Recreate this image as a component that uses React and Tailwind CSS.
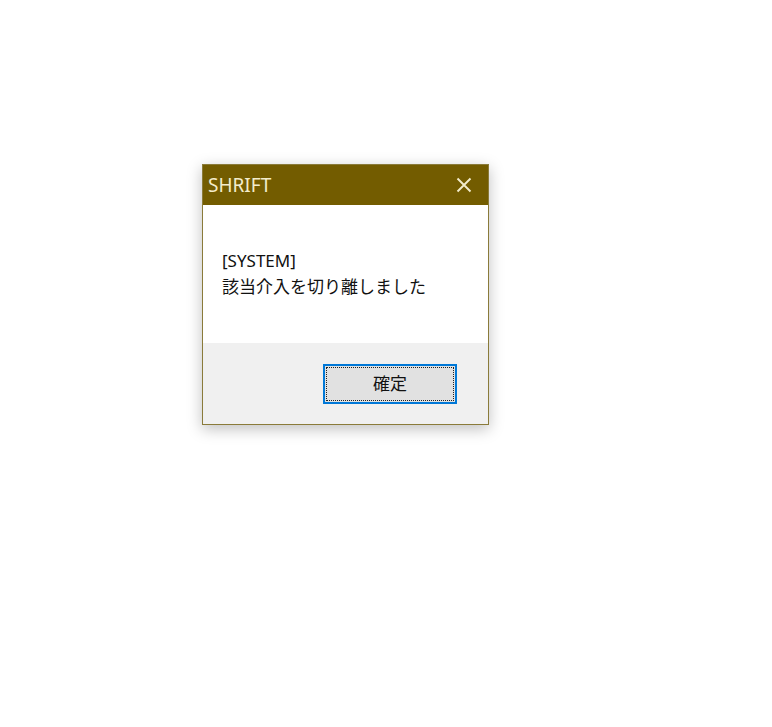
export default function App() {
  return (
    <div className="min-h-screen bg-white pt-[164px] pl-[202px]" style={{ fontFamily: '"Noto Sans", "Noto Sans CJK JP", sans-serif' }}>
      <div className="w-[287px] border border-[#8a7b3a] bg-white shadow-[0_4px_14px_rgba(0,0,0,0.25)]">
        <div className="h-[40px] bg-[#735c00] flex items-center justify-between pl-[5px] pr-[16px]">
          <span className="text-[19px] text-[#f3eccc] leading-none">SHRIFT</span>
          <svg width="16" height="16" viewBox="0 0 16 16" className="text-[#f3eccc]">
            <path d="M1.5 1.5 L14.5 14.5 M14.5 1.5 L1.5 14.5" stroke="currentColor" strokeWidth="1.9" />
          </svg>
        </div>
        <div className="h-[138px] pt-[43px] px-[19px] text-[17px] leading-[26px] text-[#111]">
          <div>[SYSTEM]</div>
          <div>該当介入を切り離しました</div>
        </div>
        <div className="h-[81px] bg-[#f0f0f0] flex justify-end items-start pt-[21px] pr-[31px]">
          <button className="w-[134px] h-[40px] border-2 border-[#0078d7] bg-[#e1e1e1] p-[1px]">
            <div className="w-full h-full border border-dotted border-[#222] flex items-center justify-center text-[17px] text-[#111]">
              確定
            </div>
          </button>
        </div>
      </div>
    </div>
  );
}
